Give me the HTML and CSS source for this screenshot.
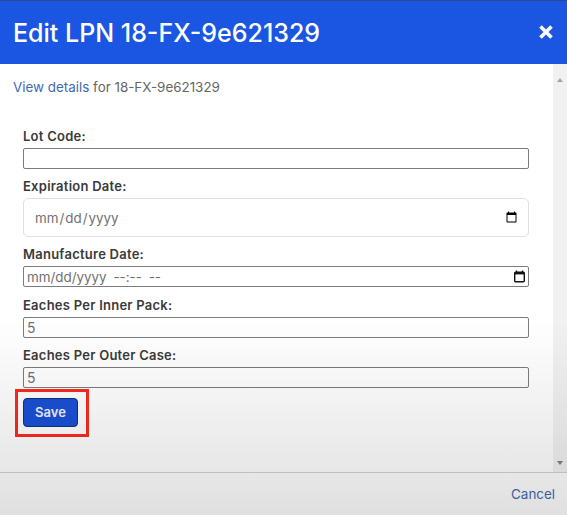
FILE: index.html
```html
<!DOCTYPE html>
<html lang="en">
<head>
  <meta charset="UTF-8">
  <title>Edit LPN</title>
  <link rel="stylesheet" href="styles.css">
</head>
<body>
  <div class="modal">
    <header class="modal-header">
      <h1>Edit LPN 18-FX-9e621329</h1>
      <button class="close" type="button" aria-label="Close">
        <svg width="16" height="16" viewBox="0 0 16 16"><path d="M2.5 2.5 13.5 13.5M13.5 2.5 2.5 13.5" stroke="#fff" stroke-width="3.6" fill="none"/></svg>
      </button>
    </header>
    <div class="modal-main">
      <div class="modal-body">
        <p class="details"><a href="#">View details</a> for 18-FX-9e621329</p>
        <form class="lpn-form">
          <div class="field">
            <label for="lot">Lot Code:</label>
            <input id="lot" type="text">
          </div>
          <div class="field">
            <label for="exp">Expiration Date:</label>
            <input id="exp" class="large" type="date">
          </div>
          <div class="field field-mfg">
            <label for="mfg">Manufacture Date:</label>
            <div class="with-icon">
              <input id="mfg" class="muted" type="text" value="mm/dd/yyyy --:-- --">
              <svg class="calendar" width="13" height="13" viewBox="0 0 13 13"><path d="M3.5 0.5V2.5M9.5 0.5V2.5" stroke="#111" stroke-width="1.4" fill="none"/><rect x="1.7" y="2.2" width="9.6" height="9.6" rx="1" stroke="#111" stroke-width="1.4" fill="none"/><path d="M1.7 3.4H11.3" stroke="#111" stroke-width="2" fill="none"/></svg>
            </div>
          </div>
          <div class="field">
            <label for="inner">Eaches Per Inner Pack:</label>
            <input id="inner" class="number" type="text" value="5">
          </div>
          <div class="field">
            <label for="outer">Eaches Per Outer Case:</label>
            <input id="outer" class="number" type="text" value="5">
          </div>
          <div class="save-wrap">
            <button class="save" type="button">Save</button>
            <div class="highlight"></div>
          </div>
        </form>
      </div>
      <div class="scrollbar">
        <span class="arrow-up"></span>
        <span class="arrow-down"></span>
      </div>
    </div>
    <footer class="modal-footer">
      <a href="#">Cancel</a>
    </footer>
  </div>
  <div class="fade"></div>
</body>
</html>
```

FILE: styles.css
```css
* {
  margin: 0;
  padding: 0;
  box-sizing: border-box;
  font-family: Inter, "Liberation Sans", sans-serif;
}

body {
  width: 567px;
  height: 515px;
  overflow: hidden;
  background: #fff;
  position: relative;
}

.modal {
  display: flex;
  flex-direction: column;
  height: 515px;
}

.modal-header {
  height: 64px;
  flex: none;
  display: flex;
  justify-content: space-between;
  align-items: center;
  padding: 0 13px;
  background: #1a56e2;
  border-top: 1px solid #2c4a8c;
  color: #fff;
}

.modal-header h1 {
  font-size: 25px;
  font-weight: 500;
  margin-top: 1px;
}

.close {
  background: none;
  border: none;
  display: flex;
  margin-top: -1px;
}

.modal-main {
  flex: 1;
  display: flex;
  min-height: 0;
}

.modal-body {
  flex: 1;
  padding: 14px 24px 0 23px;
}

.details {
  font-size: 13.4px;
  line-height: 18px;
  color: #666;
  margin-left: -10px;
  margin-bottom: 31px;
}

.details a,
.modal-footer a {
  color: #3d6bb3;
  text-decoration: none;
}

.field {
  margin-bottom: 8px;
}

.field-mfg {
  margin-bottom: 9px;
}

.field label {
  display: block;
  font-size: 13px;
  font-weight: 600;
  line-height: 18px;
  letter-spacing: 0.25px;
  color: #3a3a3a;
  margin-bottom: 3px;
}

.field input {
  display: block;
  width: 100%;
  height: 21px;
  padding: 0 3px;
  font-size: 13.4px;
  color: #707070;
  background: #fff;
  border: 1px solid #7c7c7c;
  border-radius: 2px;
  outline: none;
}

.field input.large {
  height: 39px;
  padding: 0 8px 0 10px;
  border: 1px solid #e0e0e0;
  border-radius: 5px;
}

.field input.muted {
  word-spacing: 3px;
}

.field input.number {
  font-size: 14px;
}

.with-icon {
  position: relative;
}

.calendar {
  position: absolute;
  right: 3px;
  top: 4px;
}

.save-wrap {
  position: relative;
  width: 55px;
  margin-top: 10px;
}

.save {
  display: block;
  width: 55px;
  height: 29px;
  padding-bottom: 2px;
  font-size: 13px;
  font-weight: 600;
  color: #eef3ff;
  background: #1a50d6;
  border: 1px solid #0f2f80;
  border-radius: 4px;
}

.highlight {
  position: absolute;
  left: -8px;
  top: -9px;
  width: 74px;
  height: 48px;
  border: 3px solid #fb2a1e;
}

.scrollbar {
  width: 14px;
  flex: none;
  display: flex;
  flex-direction: column;
  justify-content: space-between;
  align-items: center;
  padding: 14px 0 7px;
  background: #f1f1f1;
}

.arrow-up,
.arrow-down {
  width: 0;
  height: 0;
  border-left: 3.5px solid transparent;
  border-right: 3.5px solid transparent;
}

.arrow-up {
  border-bottom: 4px solid #a3a3a3;
}

.arrow-down {
  border-top: 4px solid #808080;
}

.modal-footer {
  height: 43px;
  flex: none;
  display: flex;
  justify-content: flex-end;
  align-items: center;
  padding: 0 12px 0 0;
  border-top: 1px solid #d4d4d4;
  font-size: 13.4px;
}

/* grey wash over the lower part of the dialog */
.fade {
  position: absolute;
  left: 0;
  right: 0;
  top: 320px;
  bottom: 0;
  background: linear-gradient(rgba(0, 0, 0, 0), rgba(0, 0, 0, 0.12));
  pointer-events: none;
}
```
